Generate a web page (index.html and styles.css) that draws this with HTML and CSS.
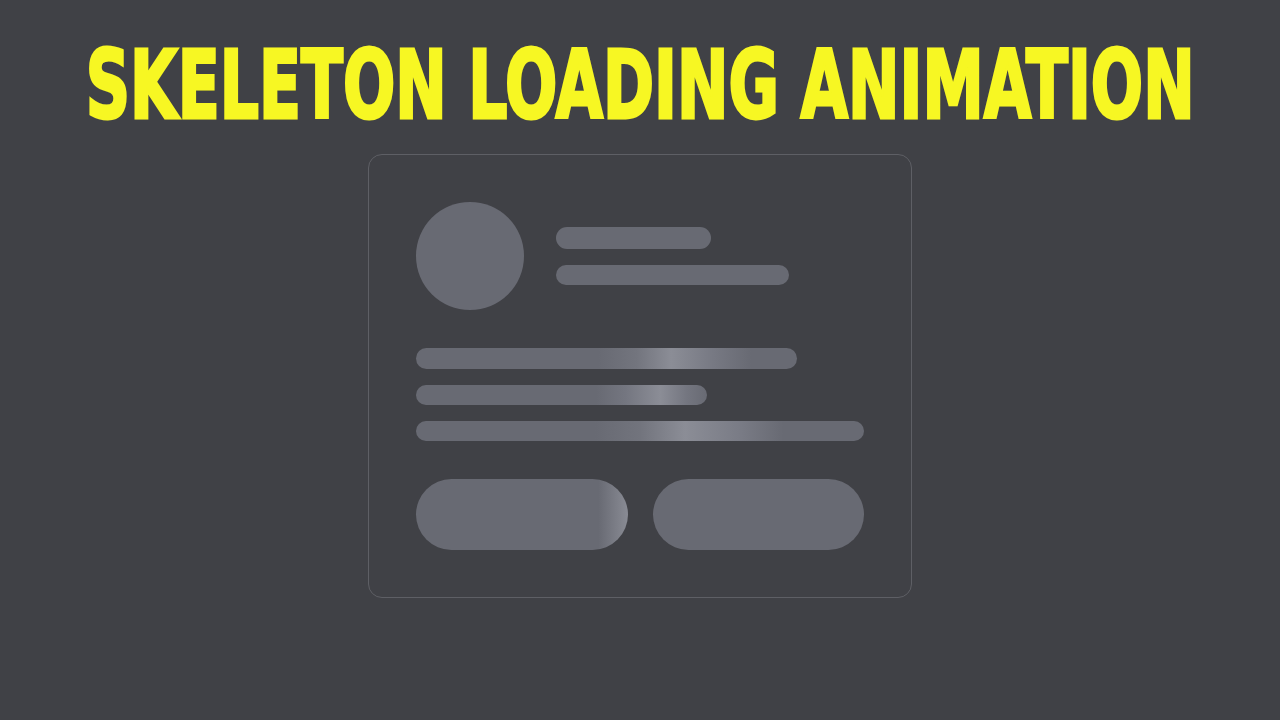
FILE: index.html
```html
<!DOCTYPE html>
<html lang="en">
<head>
    <meta charset="UTF-8">
    <title>Skeleton Loading Animation</title>
    <link rel="stylesheet" href="styles.css">
</head>
<body>
<div class="main">
    <h1 class="title">SKELETON LOADING ANIMATION</h1>

    <div class="card">
        <div class="card-head">
            <div class="avatar skeleton"></div>
            <div class="head-lines">
                <div class="line line-name skeleton"></div>
                <div class="line line-sub skeleton"></div>
            </div>
        </div>

        <div class="card-body">
            <div class="line line-1 skeleton shine-1"></div>
            <div class="line line-2 skeleton shine-2"></div>
            <div class="line line-3 skeleton shine-3"></div>
        </div>

        <div class="card-buttons">
            <div class="btn skeleton shine-btn"></div>
            <div class="btn skeleton"></div>
        </div>
    </div>
</div>
</body>
</html>
```

FILE: styles.css
```css
body {
    margin: 0;
    background-color: #404146;
}

.main {
    width: 1280px;
    height: 720px;
    overflow: hidden;
    display: flex;
    flex-direction: column;
    align-items: center;
}

/* condensed heading, squeezed to an Impact-like width */
.title {
    flex: none;
    margin: 33px 0 0 0;
    height: 121px;
    font-family: "DejaVu Sans Condensed", "DejaVu Sans", sans-serif;
    font-weight: bold;
    font-size: 95px;
    line-height: 104px;
    color: #f7f723;
    -webkit-text-stroke: 3px #f7f723;
    white-space: nowrap;
    transform: scaleX(0.72);
}

.card {
    box-sizing: border-box;
    width: 544px;
    height: 444px;
    padding: 47px;
    border: 1px solid #5e5f65;
    border-radius: 14px;
}

.skeleton {
    background-color: #686a73;
}

.card-head {
    display: flex;
    align-items: center;
    gap: 32px;
}

.avatar {
    width: 108px;
    height: 108px;
    border-radius: 50%;
}

.head-lines {
    display: flex;
    flex-direction: column;
    gap: 16px;
}

.line {
    height: 21px;
    border-radius: 11px;
}

.line-name {
    width: 155px;
    height: 22px;
}

.line-sub {
    width: 233px;
    height: 20px;
}

.card-body {
    margin-top: 38px;
    display: flex;
    flex-direction: column;
    gap: 16px;
}

.line-1 {
    width: 381px;
}

.line-2 {
    width: 291px;
    height: 20px;
}

.line-3 {
    width: 448px;
    height: 20px;
}

.shine-1 {
    background: linear-gradient(90deg, #686a73 0%, #686a73 48%, #73757e 58%, #8b8d96 67%, #777983 78%, #686a73 88%, #686a73 100%);
}

.shine-2 {
    background: linear-gradient(90deg, #686a73 0%, #686a73 62%, #747680 72%, #8b8d96 84%, #747680 93%, #686a73 100%);
}

.shine-3 {
    background: linear-gradient(90deg, #686a73 0%, #686a73 40%, #72747d 50%, #8b8d96 60%, #7a7c86 72%, #686a73 82%, #686a73 100%);
}

.shine-btn {
    background: linear-gradient(90deg, #686a73 0%, #686a73 86%, #7b7d86 94%, #898b94 100%);
}

.card-buttons {
    margin-top: 38px;
    display: flex;
    gap: 25px;
}

.btn {
    flex: 1;
    height: 71px;
    border-radius: 36px;
}
```
